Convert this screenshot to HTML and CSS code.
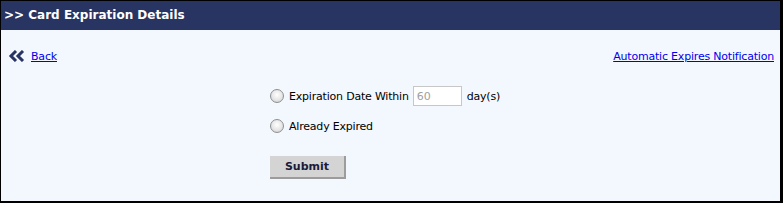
FILE: index.html
```html
<!DOCTYPE html>
<html lang="en">
<head>
  <meta charset="UTF-8"/>
  <title>Card Expiration Details</title>
  <link rel="stylesheet" href="styles.css">
</head>
<body>
<div class="panel">
  <div class="panel-head">&gt;&gt; Card Expiration Details</div>
  <div class="panel-body">
    <div class="toolbar">
      <a href="#" class="back">
        <svg class="chev" width="17" height="12" viewBox="0 0 17 12">
          <polyline points="8,1 3,6 8,11" fill="none" stroke="#283461" stroke-width="3"/>
          <polyline points="15,1 10,6 15,11" fill="none" stroke="#283461" stroke-width="3"/>
        </svg>
        <span>Back</span>
      </a>
      <a href="#" class="notify">Automatic Expires Notification</a>
    </div>

    <form class="exp-form">
      <label class="opt">
        <input type="radio" name="exp">
        <span class="radio"></span>
        Expiration Date Within
        <input type="text" class="days" value="60" disabled>
        day(s)
      </label>
      <label class="opt">
        <input type="radio" name="exp">
        <span class="radio"></span>
        Already Expired
      </label>
      <button type="button" class="submit-btn">Submit</button>
    </form>
  </div>
</div>
</body>
</html>
```

FILE: styles.css
```css
body { margin:0; background:#fff; font-family:'DejaVu Sans', Verdana, sans-serif; font-size:11px; color:#000; }
.panel { width:779px; height:200px; border:1px solid #000; border-right:3px solid #000; border-bottom:2px solid #000; background:#f3f7fe; }
.panel-head { background:#283461; color:#fff; font-weight:bold; font-size:12px; height:29px; line-height:29px; padding-left:3px; }
.panel-body { padding:16px 6px 0 7px; letter-spacing:-0.2px; }
.toolbar { display:flex; justify-content:space-between; align-items:center; height:20px; }
.toolbar a { color:#0000ee; }
.back { display:flex; align-items:center; gap:6px; }
.chev { display:block; }
.back span { text-decoration:underline; }
.exp-form { display:flex; flex-direction:column; align-items:flex-start; padding-left:262px; margin-top:15px; }
.opt { display:flex; align-items:center; height:30px; color:#000; }
.opt input[type=radio] { display:none; }
.radio { width:12px; height:12px; border:1px solid #8e8f8f; border-radius:50%; background:radial-gradient(circle at 50% 40%, #fff 0%, #e6e6e6 55%, #c8c8c8 100%); margin-right:5px; }
.days { width:41px; height:18px; padding:0 3px; margin:0 5px 0 4px; border:1px solid #c7c7c7; background:#fff; color:#a0a0a0; font-family:inherit; font-size:11px; }
.submit-btn { margin-top:15px; width:76px; height:23px; background:#d4d4d4; border:none; border-right:2px solid #9c9c9c; border-bottom:2px solid #9c9c9c; font-family:inherit; font-weight:bold; font-size:11px; color:#1b1b3a; }
```
